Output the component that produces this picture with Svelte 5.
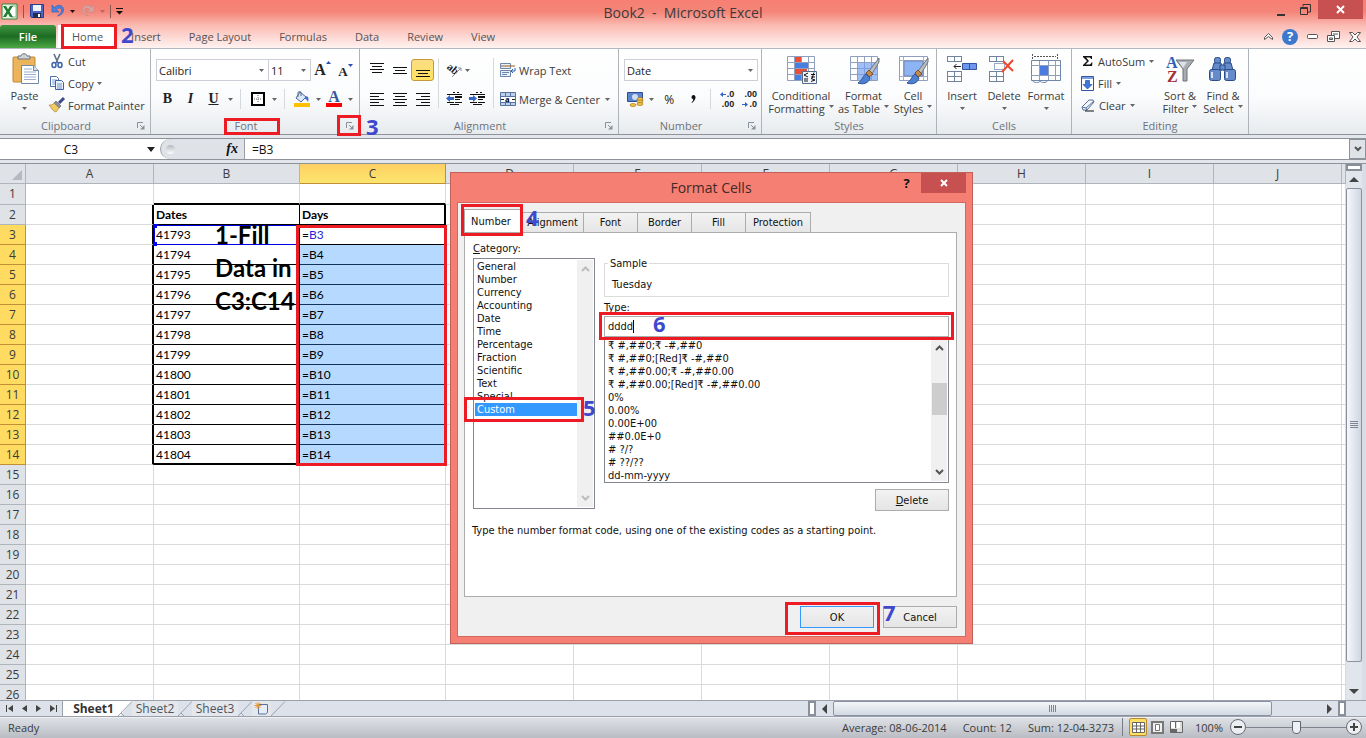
<script lang="ts">
  const menus = ["Insert", "Page Layout", "Formulas", "Data", "Review", "View"];
  const columns = ["A", "B", "C", "D", "E", "F", "G", "H", "I", "J"];
  const rows = Array.from({ length: 26 }, (_, i) => i + 1);
  const firstDate = 41793;

  const dialogTabs = ["Alignment", "Font", "Border", "Fill", "Protection"];
  const categories = [
    "General", "Number", "Currency", "Accounting", "Date", "Time",
    "Percentage", "Fraction", "Scientific", "Text", "Special", "Custom",
  ];
  const formats = [
    "₹ #,##0;₹ -#,##0",
    "₹ #,##0;[Red]₹ -#,##0",
    "₹ #,##0.00;₹ -#,##0.00",
    "₹ #,##0.00;[Red]₹ -#,##0.00",
    "0%",
    "0.00%",
    "0.00E+00",
    "##0.0E+0",
    "# ?/?",
    "# ??/??",
    "dd-mm-yyyy",
  ];

  let category = $state("Custom");
  let typeCode = $state("dddd");
  let formula = $state("=B3");
  let cellName = $state("C3");
  let zoom = $state(50);

  const inRange = (r: number) => r >= 3 && r <= 14;
</script>

{#snippet caret()}
  <svg class="caret" width="5" height="3" viewBox="0 0 5 3"><path d="M0 0h5L2.500 3z" fill="#666" /></svg>
{/snippet}

{#snippet launcher()}
  <button class="launcher" aria-label="More options">
    <svg width="8" height="8" viewBox="0 0 8 8" fill="none" stroke="#8a9099">
      <path d="M.5 6V.5H6M3 3l3 3" /><path d="M7.500 3v4.500H3z" fill="#8a9099" stroke="none" />
    </svg>
  </button>
{/snippet}

{#snippet lines(widths: number[], top: number, gap: number)}
  <svg width="16" height="16" viewBox="0 0 16 16" fill="#111">
    {#each widths as w, i}
      <rect x={w < 0 ? 15 + w : w === 10 ? 3 : 1} y={top + i * gap} width={Math.abs(w)} height="1" />
    {/each}
  </svg>
{/snippet}

{#snippet indent(dir: string)}
  <svg width="17" height="16" viewBox="0 0 17 16">
    <path d="M7 1h2v1H7zM11 1h2v1h-2zM1 3h15v1H1zM9 5h7v2H9zM9 8h5v1H9zM1 11h7v1H1zM9 11h7v1H9zM4 13h9v1H4z" fill="#111" />
    {#if dir === "out"}
      <path d="M0 7.500L4 4v2h4v3H4v2z" fill="#3465c8" />
    {:else}
      <path d="M8 7.500L4 4v2H0v3h4v2z" fill="#3465c8" />
    {/if}
  </svg>
{/snippet}

{#snippet tableGrid()}
  <path d="M2.500 3.500h27v24h-27z" fill="#fff" stroke="#8fa0bf" />
  <path d="M2.500 9.500h27M2.500 15.500h27M2.500 21.500h27M9.500 3.500v24M16.500 3.500v24M23.500 3.500v24" stroke="#8fa0bf" />
{/snippet}

{#snippet brush()}
  <path d="M31 5L21 18l3 3 7-12z" fill="#b9bec5" stroke="#6c737d" />
  <path d="M21 17l-3 3 3 4 4-3z" fill="#c58a4a" stroke="#7b5127" />
  <path d="M18 21c-3 1-3 6-8 9 5 2 11 0 12-5z" fill="#4d80d0" stroke="#2c509a" />
{/snippet}

{#snippet smallGrid(y: number, rowsHigh: number)}
  <rect x="1.500" y={y + 0.5} width="14" height={rowsHigh * 5} fill="#fff" stroke="#71849d" />
  <path d="M8.500 {y}v{rowsHigh * 5}" stroke="#71849d" />
  {#if rowsHigh > 1}<path d="M1 {y + 5.5}h15" stroke="#71849d" />{/if}
{/snippet}

<div class="app">
  <header class="chrome">
    <div class="titlebar">
      <div class="quick">
        <svg width="17" height="17" viewBox="0 0 17 17">
          <path d="M1 1h15v15H1z" fill="#e8f4e4" stroke="#37833a" />
          <path d="M10 3h5v11h-5" fill="#fff" stroke="#86b986" />
          <path d="M2 3h3l2 3.500L9 3h3L8.500 8.500 12 14H9L7 10.500 5 14H2l3.500-5.500z" fill="#1e7b31" />
        </svg>
        <i class="bar"></i>
        <button aria-label="Save">
          <svg width="16" height="16" viewBox="0 0 16 16">
            <path d="M1.500 1.500h13v13h-12l-1-1z" fill="#4b63c4" stroke="#283d91" />
            <path d="M4 2h8v6H4z" fill="#eef3fc" /><path d="M4 10h8v5H4z" fill="#222d55" /><path d="M9 11h2v3H9z" fill="#fff" />
          </svg>
        </button>
        <button aria-label="Undo">
          <svg width="16" height="16" viewBox="0 0 16 16">
            <path d="M2 2v7h7L6.500 6.500C9 4 12 5 11.500 8c-.3 2-2 3.500-4 5C12 12 14 9 13.500 6 12.500 2 8 1 4.500 4.500z" fill="#4b82dc" stroke="#2c5bb1" stroke-width=".6" />
          </svg>
          <svg class="caret" width="5" height="3" viewBox="0 0 5 3"><path d="M0 0h5L2.500 3z" fill="#111" /></svg>
        </button>
        <button aria-label="Redo">
          <svg width="16" height="16" viewBox="0 0 16 16">
            <path d="M14 2v7H7l2.500-2.500C7 4 4 5 4.500 8c.3 2 2 3.500 4 5C4 12 2 9 2.500 6 3.500 2 8 1 11.500 4.500z" fill="#d9a39f" stroke="#c08a88" stroke-width=".6" />
          </svg>
          <svg class="caret" width="5" height="3" viewBox="0 0 5 3"><path d="M0 0h5L2.500 3z" fill="#b66" /></svg>
        </button>
        <i class="bar"></i>
        <button aria-label="Customize Quick Access Toolbar">
          <svg width="7" height="7" viewBox="0 0 7 7"><path d="M0 0h7v1H0zM0 3h7L3.500 6.500z" fill="#111" /></svg>
        </button>
      </div>
      <h1>Book2&nbsp; -&nbsp; Microsoft Excel</h1>
      <div class="window-buttons">
        <button aria-label="Minimize"><svg width="10" height="12"><path d="M1 10h8v2H1z" fill="#333" /></svg></button>
        <button aria-label="Restore"><svg width="11" height="11" fill="none" stroke="#333"><path d="M.5 3.500h7v7h-7zM3 2.500V.5h7.500V8H8" /><path d="M0 4.500h8" /></svg></button>
        <button class="close" aria-label="Close"><svg width="9" height="9" stroke="#fff" stroke-width="2"><path d="M1 1l7 7M8 1L1 8" /></svg></button>
      </div>
    </div>
    <nav class="menu">
      <button class="file">File</button>
      <button class="home">Home</button>
      {#each menus as m}
        <button>{m}</button>
      {/each}
      <div class="book-buttons">
        <button aria-label="Minimize the Ribbon"><svg width="9" height="8" fill="#fff" stroke="#555"><path d="M.5 6.500v-2l4-4 4 4v2l-4-3z" /></svg></button>
        <button class="help" aria-label="Help">?</button>
        <button aria-label="Minimize Window"><svg width="11" height="5"><rect x=".5" y=".5" width="10" height="4" rx="1" fill="#fff" stroke="#555" /></svg></button>
        <button aria-label="Restore Window"><svg width="13" height="12" fill="#fff" stroke="#555"><path d="M4.500.5h8v7h-8z" /><path d="M6 3h5" /><path d="M.5 4.500h7v6h-7zM2.500 7h3v1.500h-3z" /></svg></button>
        <button aria-label="Close Window"><svg width="12" height="10" fill="#fff" stroke="#555"><path d="M.5.5h3L6 3 8.500.5h3L8 5l3.500 4.500h-3L6 7 3.500 9.500h-3L4 5z" /></svg></button>
      </div>
    </nav>
  </header>

  <div class="ribbon">
    <section class="group clipboard">
      <div class="body">
        <button class="large">
          <svg width="32" height="32" viewBox="0 0 32 32">
            <rect x="4" y="4" width="22" height="25" rx="1" fill="#ecb55c" stroke="#b98735" />
            <path d="M9 6V3h3c0-3 6-3 6 0h3v3z" fill="#cfd3d8" stroke="#70757c" />
            <path d="M12.500 12.500h12l5 5v13h-17z" fill="#fff" stroke="#7189a8" /><path d="M24.500 12.500v5h5" fill="#d5e0f0" stroke="#7189a8" />
            <path d="M15 16h8M15 19h12M15 21.500h12M15 24h12M15 26.500h12" stroke="#9bb0cc" />
          </svg>
          <span>Paste</span>{@render caret()}
        </button>
        <div class="stack">
          <button>
            <svg width="16" height="16" viewBox="0 0 16 16"><path d="M5 1l4 9M11 1L7 10" stroke="#5f6f85" stroke-width="1.600" /><g fill="none" stroke="#3c63b1" stroke-width="1.500"><ellipse cx="5" cy="12" rx="2" ry="2.500" /><ellipse cx="11" cy="12" rx="2" ry="2.500" /></g></svg>
            Cut
          </button>
          <button>
            <svg width="16" height="16" viewBox="0 0 16 16"><path d="M1.500 1.500h6l2 2v8h-8z" fill="#fff" stroke="#4a6ea9" /><path d="M3 5h5M3 7h5M3 9h5" stroke="#7d9cd0" /><path d="M6.500 5.500h6l2 2v7h-8z" fill="#eaf1fb" stroke="#3d62a3" /><path d="M8 9h5M8 11h5M8 13h5" stroke="#6e90cc" /></svg>
            Copy {@render caret()}
          </button>
          <button>
            <svg width="16" height="16" viewBox="0 0 16 16"><path d="M15 1l-5 5" stroke="#3c4a86" stroke-width="3" /><path d="M7 4l5 5-2 2-5-5z" fill="#8b90a0" stroke="#4d5263" stroke-width=".6" /><path d="M5 6c-1 2-3 2-5 2 2 2 3 6 7 7 1-1 2-3 3-4z" fill="#f0ca62" stroke="#a37b2a" stroke-width=".6" /></svg>
            Format Painter
          </button>
        </div>
      </div>
      <footer><span>Clipboard</span>{@render launcher()}</footer>
    </section>

    <section class="group font">
      <div class="body rows">
        <div class="row">
          <label class="combo face"><select aria-label="Font"><option>Calibri</option></select>{@render caret()}</label>
          <label class="combo size"><select aria-label="Font Size"><option>11</option></select>{@render caret()}</label>
          <button class="tool serif grow" aria-label="Increase Font Size">A<svg width="5" height="3"><path d="M0 3h5L2.500 0z" fill="#2b4fae" /></svg></button>
          <button class="tool serif shrink" aria-label="Decrease Font Size">A<svg width="5" height="3"><path d="M0 0h5L2.500 3z" fill="#2b4fae" /></svg></button>
        </div>
        <div class="row">
          <button class="tool serif">B</button>
          <button class="tool serif italic">I</button>
          <button class="tool serif under">U</button>
          <button class="arrow" aria-label="Underline style">{@render caret()}</button>
          <i class="sep"></i>
          <button class="tool" aria-label="Borders"><svg width="14" height="14"><path d="M1 1h12v12H1z" fill="#fff" stroke="#000" stroke-width="2" /><path d="M7 3v8M3 7h8" stroke="#666" stroke-dasharray="1 1" /></svg></button>
          <button class="arrow" aria-label="Border style">{@render caret()}</button>
          <i class="sep"></i>
          <button class="tool" aria-label="Fill Color"><svg width="16" height="16" viewBox="0 0 16 16"><path d="M6 1l6 5-5 5-5-4z" fill="#dbe8f7" stroke="#4a6694" /><path d="M4 6V2c0-2 3-2 3 0v3" fill="none" stroke="#4a6694" /><path d="M11 5c4 0 4 3 3 6-1-2-2-3-3-3z" fill="#3f76cc" /><path d="M0 12h16v4H0z" fill="#ffc000" /></svg></button>
          <button class="arrow" aria-label="Fill Color list">{@render caret()}</button>
          <button class="tool serif color-a" aria-label="Font Color">A</button>
          <button class="arrow" aria-label="Font Color list">{@render caret()}</button>
        </div>
      </div>
      <footer><span>Font</span>{@render launcher()}</footer>
    </section>

    <section class="group alignment">
      <div class="body">
        <div class="rows">
          <div class="row">
            <button class="tool" aria-label="Top Align">{@render lines([14, 10, 14, 10], 1, 3)}</button>
            <button class="tool" aria-label="Middle Align">{@render lines([14, 10, 14], 5, 3)}</button>
            <button class="tool on" aria-label="Bottom Align">{@render lines([14, 10, 14], 8, 3)}</button>
          </div>
          <div class="row">
            <button class="tool" aria-label="Align Left">{@render lines([14, 9, 14, 9, 14], 2, 3)}</button>
            <button class="tool" aria-label="Center">{@render lines([14, 10, 14, 10, 14], 2, 3)}</button>
            <button class="tool" aria-label="Align Right">{@render lines([14, -9, 14, -9, 14], 2, 3)}</button>
          </div>
        </div>
        <i class="sep tall"></i>
        <div class="rows">
          <div class="row">
            <button class="tool orient" aria-label="Orientation">
              <svg width="17" height="16" viewBox="0 0 17 16"><text x="1" y="10" font-size="11" font-weight="700" font-family="Liberation Serif, serif" transform="rotate(40 6 7)" fill="#222">ab</text><path d="M6 15l9-9M15 6v3M15 6h-3" stroke="#8a8f98" fill="none" /></svg>
              {@render caret()}
            </button>
          </div>
          <div class="row">
            <button class="tool" aria-label="Decrease Indent">{@render indent("out")}</button>
            <button class="tool" aria-label="Increase Indent">{@render indent("in")}</button>
          </div>
        </div>
        <i class="sep tall"></i>
        <div class="rows">
          <div class="row">
            <button class="text-tool">
              <svg width="16" height="16" viewBox="0 0 16 16"><path d="M.5 1.500h10v5H.5zM.5 8.500h10v6H.5z" fill="#e9f0fa" stroke="#6d86ab" /><path d="M1 4h14" stroke="#9c5a1c" /><path d="M2 10.500h7M2 12.500h5" stroke="#6d86ab" /><path d="M15 6v3h-4M13 7l-2 2 2 2" fill="none" stroke="#2c5bb1" /></svg>
              Wrap Text
            </button>
          </div>
          <div class="row">
            <button class="text-tool">
              <svg width="16" height="16" viewBox="0 0 16 16"><path d="M.5 1.500h15v13H.5z" fill="#bcd0ee" stroke="#56749f" /><path d="M1 5.500h14M1 11.500h14M5.500 2v3M10.500 2v3M5.500 12v2M10.500 12v2" stroke="#56749f" /><path d="M1 6h14v5H1z" fill="#fff" /><text x="5" y="11" font-size="9" font-weight="700" font-family="Liberation Serif, serif">a</text><path d="M1 8.500h3M12 8.500h3" stroke="#222" /></svg>
              Merge &amp; Center {@render caret()}
            </button>
          </div>
        </div>
      </div>
      <footer><span>Alignment</span>{@render launcher()}</footer>
    </section>

    <section class="group number">
      <div class="body rows">
        <div class="row">
          <label class="combo format"><select aria-label="Number Format"><option>Date</option></select>{@render caret()}</label>
        </div>
        <div class="row">
          <button class="tool" aria-label="Accounting Number Format"><svg width="17" height="16" viewBox="0 0 17 16"><path d="M.5 1.500h15v9H.5z" fill="#5b84cf" stroke="#2d4e91" /><ellipse cx="8" cy="6" rx="3" ry="3" fill="#cfdef5" /><g fill="#f3c54b" stroke="#a97814" stroke-width=".7"><ellipse cx="13" cy="8" rx="3" ry="1.500" /><ellipse cx="13" cy="10.500" rx="3" ry="1.500" /><ellipse cx="13" cy="13" rx="3" ry="1.500" /><ellipse cx="6" cy="14" rx="3" ry="1.500" /></g></svg></button>
          <button class="arrow" aria-label="Currency list">{@render caret()}</button>
          <button class="tool pct">%</button>
          <button class="tool" aria-label="Comma Style"><svg width="5" height="8"><path d="M2.500 0C5 0 6 4 1 8L.5 7.500C2 6 2.500 5 2 4 0 4 0 0 2.500 0z" fill="#111" /></svg></button>
          <i class="sep"></i>
          <button class="tool decimals" aria-label="Increase Decimal"><span><svg width="6" height="5"><path d="M0 2.500L3 0v2h3v1H3v2z" fill="#2f62cf" /></svg>.0</span><span>.00</span></button>
          <button class="tool decimals" aria-label="Decrease Decimal"><span>.00</span><span><svg width="6" height="5"><path d="M6 2.500L3 0v2H0v1h3v2z" fill="#2f62cf" /></svg>.0</span></button>
        </div>
      </div>
      <footer><span>Number</span>{@render launcher()}</footer>
    </section>

    <section class="group styles">
      <div class="body">
        <button class="large w66">
          <svg width="32" height="32" viewBox="0 0 32 32">{@render tableGrid()}<path d="M10 4h6v5h-6zM10 16h12v5H10z" fill="#ea4f35" /><path d="M10 10h13v5H10zM10 22h6v5h-6z" fill="#4a7fe0" /><path d="M17.500 18.500h14v12h-14z" fill="#f3f7fc" stroke="#546a8c" /><path d="M23 20l-4 2 4 2M19 26h4M19 28h4M26 21.500h4M26 24h4M29 19.500l-2 6M26 25.500l4 1.500-4 1.500" stroke="#111" fill="none" /></svg>
          <span>Conditional</span><span>Formatting {@render caret()}</span>
        </button>
        <button class="large w56">
          <svg width="32" height="32" viewBox="0 0 32 32">{@render tableGrid()}<path d="M10 10h19v17H10z" fill="#6f9df0" opacity=".65" />{@render brush()}</svg>
          <span>Format</span><span>as Table {@render caret()}</span>
        </button>
        <button class="large w42">
          <svg width="32" height="32" viewBox="0 0 32 32"><path d="M2.500 3.500h28v24h-28z" fill="#fff" stroke="#8fa0bf" /><path d="M3 7.500h27M3 23.500h27M6.500 4v23M26.500 4v23" stroke="#a5b3cb" /><path d="M7 8h19v15H7z" fill="#8fb4f5" stroke="#7186ab" />{@render brush()}</svg>
          <span>Cell</span><span>Styles {@render caret()}</span>
        </button>
      </div>
      <footer><span>Styles</span></footer>
    </section>

    <section class="group cells">
      <div class="body">
        <button class="large w42">
          <svg width="32" height="32" viewBox="0 0 32 32">{@render smallGrid(3, 1)}{@render smallGrid(18, 2)}<path d="M16.500 10.500h14v6h-14z" fill="#6c97ec" stroke="#31569c" /><path d="M23.500 11v5" stroke="#31569c" /><path d="M15 13.500H8M10.500 11L8 13.500l2.500 2.500" stroke="#222" fill="none" /></svg>
          <span>Insert</span>{@render caret()}
        </button>
        <button class="large w42">
          <svg width="32" height="32" viewBox="0 0 32 32">{@render smallGrid(3, 1)}{@render smallGrid(18, 2)}<path d="M6.500 10.500h10v6h-10z" fill="none" stroke="#31569c" stroke-dasharray="1 1" /><path d="M15 8l10 10M25 7L14 19" stroke="#f0462e" stroke-width="2" /></svg>
          <span>Delete</span>{@render caret()}
        </button>
        <button class="large w42">
          <svg width="32" height="32" viewBox="0 0 32 32"><path d="M2.500 1v5M27.500 1v5M4 3.500h22" stroke="#555" stroke-dasharray="2 1" /><path d="M1.500 7.500h29v20h-29z" fill="#fff" stroke="#7186ab" /><path d="M1 12.500h29M1 22.500h29M9.500 8v19M18.500 8v19M25.500 8v19" stroke="#8fa0bf" /><path d="M10 13h8v9h-8z" fill="#4c7ce0" /><path d="M3 28c0 2 7 2 7 0 1 2 7 2 7 0" stroke="#7186ab" fill="#fff" /></svg>
          <span>Format</span>{@render caret()}
        </button>
      </div>
      <footer><span>Cells</span></footer>
    </section>

    <section class="group editing">
      <div class="body">
        <div class="stack">
          <button><svg width="13" height="12" viewBox="0 0 13 12"><path d="M2 1h9v3h-1c0-1-1-1.500-2-1.500H5L8 6l-3.500 3.500H8c1 0 2-.5 2.500-2h1L11 11H2v-1l4-4-4-4z" fill="#111" /></svg>AutoSum {@render caret()}</button>
          <button><svg width="13" height="15" viewBox="0 0 13 15"><path d="M.5.5h12v14H.5z" fill="#fff" stroke="#31569c" /><path d="M1 1h11v2H1z" fill="#7ca1e4" /><path d="M4.500 4.500h4v4H11l-4.500 4.500L2 8.500h2.500z" fill="#3f76dc" stroke="#2650a3" stroke-width=".7" /></svg>Fill {@render caret()}</button>
          <button><svg width="14" height="13" viewBox="0 0 14 13"><path d="M1 8l7-7h4l1 2-7 8H2z" fill="#f2f6fc" stroke="#5a7099" /><path d="M1 8l4 1 8-7M5 9l1 2" stroke="#5a7099" fill="none" /><path d="M4 12h9" stroke="#111" /></svg>Clear {@render caret()}</button>
        </div>
        <button class="large w44">
          <svg width="32" height="32" viewBox="0 0 32 32"><text x="2" y="15" font-size="16" font-weight="700" font-family="Liberation Serif, serif" fill="#2e5fb3">A</text><text x="3" y="29" font-size="16" font-weight="700" font-family="Liberation Serif, serif" fill="#a53236">Z</text><path d="M12 7h18l-7 9v12h-4V16z" fill="#a9adb2" stroke="#6d7278" /><path d="M15 9h8l-4 6z" fill="#dfe2e5" /></svg>
          <span>Sort &amp;</span><span>Filter {@render caret()}</span>
        </button>
        <button class="large w42">
          <svg width="32" height="32" viewBox="0 0 32 32" fill="#668bc9" stroke="#2b4b88"><rect x="7.500" y="4.500" width="6" height="6" rx="2" /><rect x="17.500" y="4.500" width="6" height="6" rx="2" /><path d="M5 17l2-7h7l1 7zM16 17l1-7h7l2 7z" /><path d="M13 12h5v5h-5z" /><rect x="2.500" y="16.500" width="11" height="11" rx="2" /><rect x="17.500" y="16.500" width="11" height="11" rx="2" /><path d="M5 19v6M20 19v6" stroke="#d3e0f5" stroke-width="2" /></svg>
          <span>Find &amp;</span><span>Select {@render caret()}</span>
        </button>
      </div>
      <footer><span>Editing</span></footer>
    </section>
  </div>

  <div class="formula-bar">
    <label class="name-box"><input aria-label="Name Box" bind:value={cellName} /><svg width="8" height="5"><path d="M0 0h8L4 5z" fill="#222" /></svg></label>
    <div class="fx"><i></i><span>fx</span></div>
    <input class="formula" aria-label="Formula Bar" bind:value={formula} />
    <button class="expand" aria-label="Expand Formula Bar"><svg width="8" height="7" fill="none" stroke="#555" stroke-width="2"><path d="M1 1l3 3 3-3" /></svg></button>
  </div>

  <main class="workspace">
    <div class="sheet">
      <table>
        <colgroup>
          <col class="c-head" />
          {#each columns as c}<col class={c === "B" || c === "C" ? "c-wide" : "c-std"} />{/each}
          <col />
        </colgroup>
        <thead>
          <tr>
            <th class="corner"><svg width="12" height="12"><path d="M11 1v10H1z" fill="#b6bac0" /></svg></th>
            {#each columns as c}<th class:hot={c === "C"}>{c}</th>{/each}
            <th></th>
          </tr>
        </thead>
        <tbody>
          {#each rows as r}
            <tr class:first={r === 1}>
              <th class:hot={inRange(r)}>{r}</th>
              {#each columns as c}
                {#if c === "B" && r === 2}
                  <td class="b title">Dates</td>
                {:else if c === "C" && r === 2}
                  <td class="c title">Days</td>
                {:else if c === "B" && inRange(r)}
                  <td class="b" class:ref={r === 3} class:last={r === 14}>
                    {firstDate + r - 3}
                    {#if r === 3}<i class="handle top"></i><i class="handle bottom"></i>{/if}
                  </td>
                {:else if c === "C" && inRange(r)}
                  <td class="c" class:picked={r > 3} class:last={r === 14}>={#if r === 3}<span class="ref-text">B3</span>{:else}B{r}{/if}</td>
                {:else}
                  <td class:edge-left={c === "A" && r >= 2 && r <= 14} class:edge-top={(c === "B" || c === "C") && r === 1}></td>
                {/if}
              {/each}
              <td></td>
            </tr>
          {/each}
        </tbody>
      </table>
    </div>
    <div class="vscroll">
      <i class="split"></i>
      <button aria-label="Scroll up"><svg width="10" height="5"><path d="M0 5h10L5 0z" fill="#444" /></svg></button>
      <div class="thumb"><i></i></div>
      <div class="track"></div>
      <button aria-label="Scroll down"><svg width="10" height="5"><path d="M0 0h10L5 5z" fill="#444" /></svg></button>
    </div>
  </main>

  <div class="sheet-bar">
    <div class="nav">
      <button aria-label="First sheet"><svg width="7" height="7"><path d="M0 0h1v7H0zM7 0v7L2 3.500z" fill="#444" /></svg></button>
      <button aria-label="Previous sheet"><svg width="5" height="7"><path d="M5 0v7L0 3.500z" fill="#444" /></svg></button>
      <button aria-label="Next sheet"><svg width="5" height="7"><path d="M0 0v7l5-3.500z" fill="#444" /></svg></button>
      <button aria-label="Last sheet"><svg width="7" height="7"><path d="M6 0h1v7H6zM0 0v7l5-3.500z" fill="#444" /></svg></button>
    </div>
    <button class="tab active">Sheet1</button>
    <svg class="slant" width="14" height="16"><path d="M0 0h14L2 15l-2-1z" fill="#fff" /><path d="M14 .5L0 15M3 12l4 4" stroke="#9aa3b0" fill="none" /></svg>
    <button class="tab">Sheet2</button>
    <svg class="slant" width="14" height="16"><path d="M14 .5L0 15M3 12l4 4" stroke="#9aa3b0" fill="none" /></svg>
    <button class="tab">Sheet3</button>
    <svg class="slant" width="14" height="16"><path d="M14 .5L0 15M3 12l4 4" stroke="#9aa3b0" fill="none" /></svg>
    <button class="tab new" aria-label="Insert Worksheet"><svg width="16" height="13"><path d="M4.500 2.500h9v8l-2 1.500h-7z" fill="#e5edfa" stroke="#5d6f98" /><path d="M4 0v7M.5 3.500h7M1.500 1l5 5M6.500 1l-5 5" stroke="#e9962a" /></svg></button>
    <svg class="slant" width="14" height="16"><path d="M14 .5L0 15" stroke="#9aa3b0" fill="none" /></svg>
    <div class="hscroll">
      <i class="split"></i>
      <button aria-label="Scroll left"><svg width="5" height="10"><path d="M5 0v10L0 5z" fill="#444" /></svg></button>
      <div class="thumb"><i></i></div>
      <div class="track"></div>
      <button aria-label="Scroll right"><svg width="5" height="10"><path d="M0 0v10l5-5z" fill="#444" /></svg></button>
      <i class="split"></i>
    </div>
  </div>

  <footer class="status">
    <span class="ready">Ready</span>
    <div class="stats"><span>Average: 08-06-2014</span><span>Count: 12</span><span>Sum: 12-04-3273</span></div>
    <div class="views">
      <button class="on" aria-label="Normal"><svg width="13" height="11"><path d="M.5.5h12v10H.5zM0 4h13M0 7h13M4.500 0v11M8.500 0v11" fill="#fff" stroke="#666" /></svg></button>
      <button aria-label="Page Layout"><svg width="13" height="13"><path d="M1 1h11v11H1z" fill="#eee" stroke="#777" stroke-width="2" /><path d="M4.500 3.500h4v6h-4z" fill="#fff" stroke="#777" /></svg></button>
      <button aria-label="Page Break Preview"><svg width="13" height="12"><path d="M.5.5h12v11H.5z" fill="#ddd" stroke="#666" /><path d="M1 1h4v6H1zM7 1h3v6H7z" fill="#fff" /><path d="M5 0h1v7H5zM0 8h7v3H0z" fill="#666" /></svg></button>
    </div>
    <span class="percent">100%</span>
    <button class="round" aria-label="Zoom out"><svg width="8" height="8"><path d="M0 3h8v2H0z" fill="#444" /></svg></button>
    <input class="zoom" type="range" min="0" max="100" aria-label="Zoom" bind:value={zoom} />
    <button class="round" aria-label="Zoom in"><svg width="8" height="8"><path d="M0 3h8v2H0zM3 0h2v8H3z" fill="#444" /></svg></button>
  </footer>

  <div class="dialog" role="dialog" aria-label="Format Cells">
    <div class="dialog-title">
      <h2>Format Cells</h2>
      <button class="what" aria-label="Help">?</button>
      <button class="close" aria-label="Close dialog"><svg width="8" height="8" stroke="#fff" stroke-width="2"><path d="M1 1l6 6M7 1L1 7" /></svg></button>
    </div>
    <div class="client">
      <div class="tabs">
        <button class="active">Number</button>
        {#each dialogTabs as t}
          <button class={t.toLowerCase()}>{t}</button>
        {/each}
      </div>
      <div class="panel">
        <div class="fields">
          <div class="left">
            <label for="category"><u>C</u>ategory:</label>
            <div class="list categories">
              <select id="category" size="12" bind:value={category}>
                {#each categories as c}<option>{c}</option>{/each}
              </select>
              <div class="listbar off">
                <svg width="9" height="6"><path d="M1 5l3.500-3.500L8 5" /></svg>
                <svg width="9" height="6"><path d="M1 1l3.500 3.500L8 1" /></svg>
              </div>
            </div>
          </div>
          <div class="right">
            <fieldset>
              <legend>Sample</legend>
              Tuesday
            </fieldset>
            <label for="type"><u>T</u>ype:</label>
            <div class="type"><input id="type" size="4" bind:value={typeCode} /><i></i></div>
            <div class="list codes">
              <select size="11" aria-label="Format codes">
                {#each formats as f}<option>{f}</option>{/each}
              </select>
              <div class="listbar">
                <svg width="9" height="6"><path d="M1 5l3.500-3.500L8 5" /></svg>
                <i></i>
                <svg width="9" height="6"><path d="M1 1l3.500 3.500L8 1" /></svg>
              </div>
            </div>
            <button class="push"><span><u>D</u>elete</span></button>
          </div>
        </div>
        <p>Type the number format code, using one of the existing codes as a starting point.</p>
      </div>
      <div class="actions">
        <button class="push default">OK</button>
        <button class="push">Cancel</button>
      </div>
    </div>
  </div>

  <!-- tutorial marks drawn over the window -->
  <div class="marks">
    <i class="box m-home"></i><b class="n-home">2</b>
    <i class="box m-font"></i>
    <i class="box m-launch"></i><b class="n-launch">3</b>
    <i class="box m-days"></i>
    <p>1-Fill<br />Data in<br />C3:C14</p>
    <i class="box m-number"></i><b class="n-number">4</b>
    <i class="box m-custom"></i><b class="n-custom">5</b>
    <i class="box m-type"></i><b class="n-type">6</b>
    <i class="box m-ok"></i><b class="n-ok">7</b>
  </div>
</div>

<style>
  :global(body) { margin: 0; overflow: hidden; }
  .app {
    --ui: "Open Sans", "Noto Sans", sans-serif;
    position: relative;
    height: 100vh;
    display: flex;
    flex-direction: column;
    overflow: hidden;
    background: #e3e6eb;
    color: #3b3b3b;
    font-family: var(--ui);
    font-size: 11px;
    line-height: 13px;
  }
  .app * { box-sizing: border-box; }
  button, input, select {
    margin: 0;
    padding: 0;
    border: 0;
    border-radius: 0;
    background: none;
    color: inherit;
    font: inherit;
    outline: none;
  }
  button {
    display: flex;
    align-items: center;
    justify-content: center;
    white-space: nowrap;
  }
  svg { display: block; flex: none; overflow: visible; }
  i { display: block; }

  /* title bar and tabs */
  .chrome { background: linear-gradient(#f57f72 0, #f58579 12px, #fbbdb5 26px, #fff3f1 48px); flex: none; }
  .titlebar { display: grid; grid-template-columns: 1fr auto 1fr; height: 25px; }
  .quick { display: flex; align-items: center; gap: 5px; padding-left: 1px; height: 22px; }
  .quick button { gap: 4px; }
  .quick .bar { width: 1px; height: 13px; background: #8b5551; }
  h1 { margin: 0; font-size: 14px; line-height: 25px; font-weight: 400; }
  .window-buttons { display: flex; justify-content: flex-end; padding-right: 3px; height: 19px; }
  .window-buttons button { width: 25px; }
  .window-buttons .close { width: 45px; background: #c75050; }
  .menu { display: flex; height: 24px; border-bottom: 1px solid #b4b9c1; color: #555; }
  .menu button { padding: 0 14px; }
  .menu .file { width: 56px; margin-right: 2px; border-radius: 3px 3px 0 0; background: linear-gradient(#3f9440, #1d6d24 50%, #4ca843); color: #fff; font-weight: 600; }
  .menu .home { background: #fff; }
  .book-buttons { display: flex; align-items: center; gap: 9px; margin-left: auto; padding-right: 5px; }
  .book-buttons button { padding: 0; }
  .book-buttons .help { width: 16px; height: 16px; border-radius: 8px; background: #3d78cf; color: #fff; font-size: 13px; font-weight: 700; }

  /* ribbon */
  .ribbon { display: flex; flex: none; height: 86px; border-bottom: 1px solid #8e939b; background: linear-gradient(#fff, #fbfcfd 55%, #e8ebee); }
  .group { display: flex; flex-direction: column; border-right: 1px solid #afb4bb; }
  .group .body { display: flex; flex: 1; min-height: 0; padding-left: 5px; }
  .group footer { display: flex; align-items: center; gap: 4px; height: 17px; color: #6c727b; }
  .group footer span { flex: 1; text-align: center; }
  .launcher { width: 9px; height: 9px; margin-right: 5px; }
  .clipboard { width: 151px; }
  .clipboard .body { padding-left: 3px; }
  .font { width: 209px; }
  .alignment { width: 259px; }
  .number { width: 143px; }
  .styles { width: 175px; }
  .cells { width: 135px; }
  .cells .body { padding-left: 4px; }
  .editing { width: 177px; }
  .editing .body { padding-left: 9px; }
  .large { flex-direction: column; justify-content: flex-start; width: 43px; padding-top: 4px; }
  .large svg:first-child { margin-bottom: 4px; }
  .large > .caret { margin-top: 5px; }
  .large span { display: flex; align-items: center; gap: 4px; }
  .w66 { width: 68px; }
  .w56 { width: 57px; }
  .w42 { width: 42px; }
  .w44 { width: 44px; }
  .stack { display: flex; flex-direction: column; padding-top: 1px; }
  .stack button { justify-content: flex-start; gap: 3px; height: 22px; padding-left: 3px; }
  .editing .stack { width: 77px; }
  .editing .stack button { gap: 4px; padding-left: 0; }
  .rows, .group .body.rows { display: flex; flex-direction: column; gap: 7px; padding-top: 10px; }
  .row { display: flex; align-items: center; height: 22px; }
  .combo { display: grid; align-items: center; height: 22px; border: 1px solid #ccd0d6; background: #fff; color: #222; }
  .combo select { grid-area: 1 / 1; width: 100%; padding-left: 2px; appearance: none; }
  .combo .caret { grid-area: 1 / 1; justify-self: end; margin-right: 4px; pointer-events: none; }
  .face { width: 113px; }
  .size { width: 43px; margin-left: -1px; }
  .format { width: 134px; }
  .tool { width: 23px; height: 22px; color: #222; }
  .tool.on { border: 1px solid #c29b3c; border-radius: 3px; background: linear-gradient(#fddd83, #ffe25f); }
  .arrow { width: 10px; height: 22px; }
  .serif { font: 700 14px "Liberation Serif", serif; }
  .grow { font-size: 16px; align-items: flex-start; padding-top: 2px; }
  .shrink { font-size: 13px; align-items: flex-start; padding-top: 5px; }
  .italic { font-style: italic; }
  .under { text-decoration: underline; }
  .color-a { width: 16px; height: 16px; margin: 0 3px; border-bottom: 4px solid #f00; font-size: 16px; line-height: 12px; color: #35589b; }
  .sep { width: 1px; height: 20px; margin: 0 5px; background: #d5d8dc; }
  .sep.tall { height: 50px; margin: 9px 4px 0; }
  .orient { width: 30px; gap: 2px; }
  .text-tool { gap: 3px; height: 22px; padding-left: 2px; }
  .text-tool .caret { margin-left: 2px; }
  .pct { width: 26px; font-size: 12px; }
  .decimals { flex-direction: column; align-items: flex-end; padding-right: 4px; font: 700 9px/10px "Liberation Sans", sans-serif; }
  .decimals span { display: flex; align-items: center; gap: 1px; }

  /* formula bar */
  .formula-bar { display: flex; flex: none; height: 22px; margin-top: 3px; border: 1px solid #8e939b; border-width: 1px 0; background: #fff; font-size: 12px; color: #111; }
  .name-box { display: flex; align-items: center; width: 160px; padding-right: 5px; }
  .name-box input { flex: 1; min-width: 0; text-align: center; padding-right: 5px; }
  .fx { display: flex; align-items: center; justify-content: space-between; width: 85px; padding: 0 6px 0 5px; border: 1px solid #9ba0a8; border-width: 0 1px; border-radius: 10px 0 0 10px; background: #dfe3e8; font: italic 700 14px "Liberation Serif", serif; }
  .fx i { width: 9px; height: 9px; border-radius: 5px; background: linear-gradient(#b4b8be, #fff); }
  .formula { flex: 1; padding-left: 7px; }
  .expand { width: 17px; border: 1px solid #8e939b; background: #dfe3e8; }

  /* worksheet */
  .workspace { display: flex; flex: 1; min-height: 0; margin-top: 3px; border-top: 1px solid #8e939b; }
  .sheet { flex: 1; min-width: 0; overflow: hidden; background: #fff; }
  table { width: 100%; table-layout: fixed; border-collapse: separate; border-spacing: 0; }
  .c-head { width: 26px; }
  .c-std { width: 128px; }
  .c-wide { width: 146px; }
  th, td { height: 20px; padding: 1px 0 0; border: 1px solid #d9dadc; border-width: 0 1px 1px 0; }
  th { border-color: #b0b5bb; background: #dfe2e7; font-size: 12px; font-weight: 400; line-height: 18px; }
  .first th, .first td { height: 21px; padding-top: 0; }
  .corner svg { margin-left: 11px; margin-top: 2px; }
  thead .hot { border-color: #c28f35; background: linear-gradient(#fdd063, #fde56f); }
  tbody .hot { border-color: #c28f35; background: #ffdb61; }
  td { font: 12px/18px "Lato", sans-serif; color: #000; padding-left: 2px; }
  td.b, td.c { border-color: #000; }
  td.c { border-right-width: 2px; }
  td.title { font-weight: 700; }
  td.edge-left { border-right: 2px solid #000; }
  td.edge-top { border-bottom: 2px solid #000; }
  td.last { border-bottom-width: 2px; line-height: 17px; }
  td.picked { background: #b6daff; border-bottom-color: #12325c; }
  td.ref { position: relative; border-bottom-color: #0000e0; box-shadow: inset 1px 1px #0000e0; }
  .handle { position: absolute; left: -1px; width: 4px; height: 4px; background: #0000ff; }
  .handle.top { top: -1px; }
  .handle.bottom { bottom: -2px; }
  .ref-text { color: #2a1fd6; }

  /* scroll bars */
  .vscroll { display: flex; flex-direction: column; width: 20px; border-right: 4px solid #d9dee6; background: #e1e5ec; }
  .vscroll .split { height: 7px; border: 2px solid #8a9099; background: #fff; }
  .vscroll button { height: 17px; }
  .vscroll .thumb { display: grid; place-items: center; flex: 1; border: 1px solid #8a92a0; border-radius: 2px; background: linear-gradient(90deg, #f5f7fb, #cfd6e2); }
  .vscroll .thumb i { width: 8px; height: 8px; background: repeating-linear-gradient(#7d8592 0 1px, transparent 1px 2px); }
  .vscroll .track { height: 21px; }
  .sheet-bar { display: flex; flex: none; height: 17px; border: 1px solid #9aa1ac; border-width: 1px 0; background: #dde1ea; }
  .nav { display: flex; align-items: center; gap: 9px; width: 63px; padding-left: 6px; border-right: 1px solid #9aa1ac; }
  .tab { width: 46px; background: #e4e7ec; font-size: 12px; line-height: 14px; color: #4f545c; }
  .tab.active { width: 55px; padding-left: 6px; background: #fff; font-weight: 700; color: #333; }
  .tab.new { width: 19px; }
  .hscroll { display: flex; width: 558px; margin-left: auto; padding-right: 20px; }
  .hscroll .split { width: 8px; border: 2px solid #8a9099; background: #fff; }
  .hscroll button { width: 17px; }
  .hscroll .thumb { display: grid; place-items: center; width: 439px; border: 1px solid #8a92a0; border-radius: 2px; background: linear-gradient(#f3f6fa, #d3d9e2); }
  .hscroll .thumb i { width: 8px; height: 7px; background: repeating-linear-gradient(90deg, #7d8592 0 1px, transparent 1px 2px); }
  .hscroll .track { flex: 1; }

  /* status bar */
  .status { display: flex; align-items: center; flex: none; height: 21px; padding: 0 4px 2px 0; border-top: 1px solid #eef0f4; background: linear-gradient(#dde0e5, #b9bdc3); }
  .ready { flex: 1; padding-left: 8px; }
  .stats { display: flex; gap: 16px; margin-right: 8px; }
  .views { display: flex; border-left: 1px solid #777d86; padding-left: 6px; gap: 1px; }
  .views button { width: 18px; height: 18px; }
  .views .on { border: 1px solid #b98a2c; border-radius: 2px; background: #ffdf68; }
  .percent { margin: 0 7px 0 10px; }
  .round { width: 16px; height: 16px; border: 1px solid #666c75; border-radius: 8px; background: #eceef1; }
  .zoom { width: 100px; height: 16px; appearance: none; background: linear-gradient(#7e848d, #7e848d) center / 100% 1px no-repeat; }
  .zoom::-webkit-slider-thumb { appearance: none; width: 9px; height: 13px; border: 1px solid #60666f; border-radius: 1px 1px 5px 5px; background: #eef0f3; }

  /* Format Cells */
  .dialog { position: absolute; left: 450px; top: 172px; width: 523px; height: 472px; display: flex; flex-direction: column; padding: 0 6px 6px; border: 1px solid #c0615a; background: #f67f73; color: #111; font-family: "DejaVu Sans Condensed", "Open Sans", sans-serif; }
  .dialog-title { display: flex; height: 29px; font-family: var(--ui); }
  h2 { flex: 1; margin: 0; padding-left: 70px; text-align: center; font-size: 14px; font-weight: 400; line-height: 29px; color: #3f2a28; }
  .dialog-title button { height: 20px; }
  .what { width: 23px; margin-right: 3px; font-size: 13px; font-weight: 700; }
  .dialog-title .close { width: 45px; background: #c75050; }
  .client { display: flex; flex: 1; flex-direction: column; padding: 6px 8px 8px 6px; border: 1px solid #d4675e; background: #f0f0f0; }
  .tabs { display: flex; align-items: flex-end; height: 23px; }
  .tabs button { width: 54px; height: 20px; border: 1px solid #acacac; border-width: 1px 1px 0 0; background: linear-gradient(#f2f2f2, #e6e6e6); }
  .tabs .active { width: 58px; height: 23px; padding-right: 4px; background: #fff; border-left-width: 1px; }
  .tabs .alignment { width: 62px; }
  .tabs .protection { width: 65px; }
  .panel { flex: 1; border: 1px solid #acacac; padding: 9px 7px; background: #fff; }
  .fields { display: flex; gap: 9px; padding-left: 1px; }
  label { display: block; }
  .left { width: 122px; }
  .left label { line-height: 14px; margin-bottom: 2px; }
  .right { display: flex; flex: 1; flex-direction: column; padding-top: 15px; }
  .list { display: flex; border: 1px solid #828790; padding: 1px; }
  .list select { flex: 1; min-width: 0; overflow: hidden; }
  .list option { min-height: 13px; height: 13px; padding: 0 2px; line-height: 13px; }
  .list option:checked { background: linear-gradient(#3399ff, #3399ff); -webkit-text-fill-color: #fff; }
  .categories { height: 251px; }
  .codes { height: 146px; }
  .listbar { display: flex; flex-direction: column; align-items: center; width: 16px; padding: 6px 0; background: #f0f0f0; }
  .listbar svg { fill: none; stroke: #555; stroke-width: 2; }
  .listbar.off svg { stroke: #bcbcbc; }
  .listbar svg:last-child { margin-top: auto; }
  .listbar i { width: 15px; height: 32px; margin-top: 32px; background: #cdcdcd; }
  fieldset { height: 40px; margin: 0 0 3px; padding: 8px 7px 0; border: 1px solid #dcdcdc; line-height: 14px; }
  legend { padding: 0 2px; margin-left: -4px; line-height: 13px; }
  .right label { line-height: 16px; }
  .type { display: flex; align-items: center; height: 21px; border: 1px solid #acacac; }
  .type input { field-sizing: content; padding-left: 3px; }
  .type i { width: 1px; height: 13px; background: #000; }
  .push { width: 74px; height: 22px; border: 1px solid #acacac; background: linear-gradient(#f2f2f2, #e5e5e5); }
  .right .push { align-self: flex-end; margin-top: 6px; }
  .push.default { border-color: #3399ff; }
  .panel p { margin: 13px 0 0; line-height: 14px; }
  .actions { display: flex; justify-content: flex-end; gap: 9px; padding-top: 9px; }

  /* marks */
  .marks { position: absolute; inset: 0; pointer-events: none; }
  .marks > * { position: absolute; }
  .box { border: 3px solid #ed1c24; }
  .marks b { font: 700 22px/20px "Open Sans", sans-serif; color: #3f48cc; }
  .marks p { left: 215px; top: 218px; margin: 0; font: 700 24px/33px "Lato", sans-serif; color: #000; white-space: nowrap; }
  .m-home { left: 61px; top: 24px; width: 56px; height: 25px; }
  .n-home { left: 121px; top: 24px; }
  .m-font { left: 224px; top: 118px; width: 56px; height: 17px; }
  .m-launch { left: 337px; top: 115px; width: 24px; height: 21px; }
  .n-launch { left: 366px; top: 116px; }
  .m-days { left: 296px; top: 225px; width: 151px; height: 241px; }
  .m-number { left: 461px; top: 204px; width: 62px; height: 32px; }
  .n-number { left: 526px; top: 207px; }
  .m-custom { left: 464px; top: 397px; width: 120px; height: 25px; }
  .n-custom { left: 583px; top: 397px; }
  .m-type { left: 599px; top: 312px; width: 355px; height: 28px; }
  .n-type { left: 653px; top: 313px; }
  .m-ok { left: 785px; top: 602px; width: 95px; height: 33px; }
  .n-ok { left: 883px; top: 602px; }
</style>
